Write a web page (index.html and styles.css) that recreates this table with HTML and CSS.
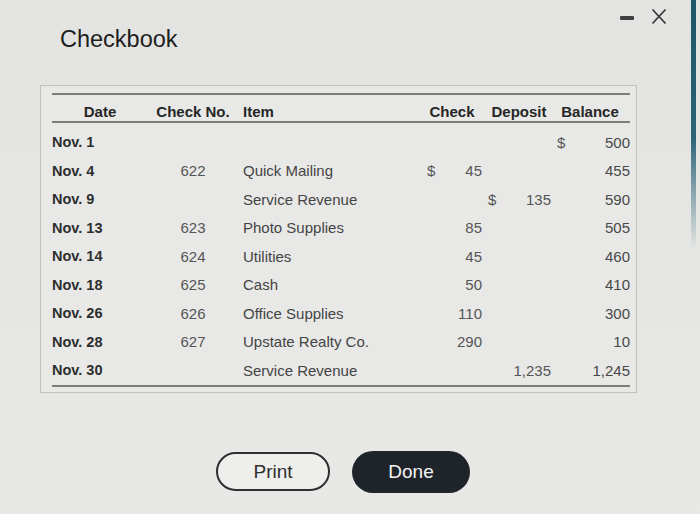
FILE: index.html
```html
<!DOCTYPE html>
<html>
<head>
<meta charset="utf-8">
<link rel="stylesheet" href="styles.css">
</head>
<body>
<div class="window">
  <div class="header">
    <h1 class="title">Checkbook</h1>
    <div class="controls">
      <span class="minimize"></span>
      <svg class="close" width="16" height="17" viewBox="0 0 16 17"><path d="M1.5 1.5 L14.5 15.5 M14.5 1.5 L1.5 15.5" stroke="#3a3a3a" stroke-width="1.8" fill="none"/></svg>
    </div>
  </div>

  <div class="sheet">
    <div class="rule-top"></div>
    <div class="grid head">
      <div class="h-date">Date</div>
      <div class="h-no">Check No.</div>
      <div class="h-item">Item</div>
      <div class="h-amt">Check</div>
      <div class="h-amt">Deposit</div>
      <div class="h-amt">Balance</div>
    </div>
    <div class="rows">
      <div class="grid row">
        <div class="c-date">Nov. 1</div><div class="c-no"></div><div class="c-item"></div>
        <div class="c-amt"></div><div class="c-amt"></div>
        <div class="c-amt bal"><span class="dol">$</span><span>500</span></div>
      </div>
      <div class="grid row">
        <div class="c-date">Nov. 4</div><div class="c-no">622</div><div class="c-item">Quick Mailing</div>
        <div class="c-amt chk"><span class="dol">$</span><span>45</span></div><div class="c-amt"></div>
        <div class="c-amt bal"><span></span><span>455</span></div>
      </div>
      <div class="grid row">
        <div class="c-date">Nov. 9</div><div class="c-no"></div><div class="c-item">Service Revenue</div>
        <div class="c-amt"></div><div class="c-amt dep"><span class="dol">$</span><span>135</span></div>
        <div class="c-amt bal"><span></span><span>590</span></div>
      </div>
      <div class="grid row">
        <div class="c-date">Nov. 13</div><div class="c-no">623</div><div class="c-item">Photo Supplies</div>
        <div class="c-amt chk"><span></span><span>85</span></div><div class="c-amt"></div>
        <div class="c-amt bal"><span></span><span>505</span></div>
      </div>
      <div class="grid row">
        <div class="c-date">Nov. 14</div><div class="c-no">624</div><div class="c-item">Utilities</div>
        <div class="c-amt chk"><span></span><span>45</span></div><div class="c-amt"></div>
        <div class="c-amt bal"><span></span><span>460</span></div>
      </div>
      <div class="grid row">
        <div class="c-date">Nov. 18</div><div class="c-no">625</div><div class="c-item">Cash</div>
        <div class="c-amt chk"><span></span><span>50</span></div><div class="c-amt"></div>
        <div class="c-amt bal"><span></span><span>410</span></div>
      </div>
      <div class="grid row">
        <div class="c-date">Nov. 26</div><div class="c-no">626</div><div class="c-item">Office Supplies</div>
        <div class="c-amt chk"><span></span><span>110</span></div><div class="c-amt"></div>
        <div class="c-amt bal"><span></span><span>300</span></div>
      </div>
      <div class="grid row">
        <div class="c-date">Nov. 28</div><div class="c-no">627</div><div class="c-item">Upstate Realty Co.</div>
        <div class="c-amt chk"><span></span><span>290</span></div><div class="c-amt"></div>
        <div class="c-amt bal"><span></span><span>10</span></div>
      </div>
      <div class="grid row">
        <div class="c-date">Nov. 30</div><div class="c-no"></div><div class="c-item">Service Revenue</div>
        <div class="c-amt"></div><div class="c-amt dep"><span></span><span>1,235</span></div>
        <div class="c-amt bal"><span></span><span>1,245</span></div>
      </div>
    </div>
    <div class="rule-bottom"></div>
  </div>

  <div class="actions">
    <button class="btn btn-print">Print</button>
    <button class="btn btn-done">Done</button>
  </div>

  <div class="edge"></div>
</div>
</body>
</html>
```

FILE: styles.css
```css
* { box-sizing: border-box; }

html, body {
  margin: 0;
  padding: 0;
}

body {
  width: 700px;
  height: 514px;
  overflow: hidden;
  background: #e4e5e3;
  font-family: "Liberation Sans", Arial, sans-serif;
  color: #333;
}

.window {
  position: relative;
  width: 700px;
  height: 514px;
  background: linear-gradient(180deg, #e3e4e2 0%, #e6e7e5 60%, #e8e9e7 100%);
}

.header {
  display: flex;
  align-items: flex-start;
  height: 85px;
  padding-right: 33px;
}

.title {
  margin: 25px 0 0 60px;
  font-size: 23.5px;
  line-height: 28px;
  font-weight: normal;
  color: #1e1e1e;
}

.controls {
  margin-left: auto;
  margin-top: 8px;
  display: flex;
  align-items: center;
  gap: 17px;
}

.minimize {
  display: block;
  width: 14px;
  height: 4px;
  background: #3f3f3f;
  border-radius: 1px;
  margin-top: 2px;
}

.close { display: block; }

.sheet {
  margin-left: 40px;
  width: 597px;
  border: 1px solid #c0c1bf;
  background: #e8e9e7;
  padding: 7px 6px 5px 11px;
}

.rule-top {
  height: 2px;
  background: #7d7e7c;
}

.rule-bottom {
  height: 2px;
  background: #7d7e7c;
}

.grid {
  display: grid;
  grid-template-columns: 96px 90px 184px 66px 68px 74px;
  align-items: center;
}

.head {
  height: 28px;
  padding-top: 6px;
  border-bottom: 2px solid #7d7e7c;
  font-weight: bold;
  font-size: 15px;
  color: #262626;
}

.h-date { text-align: center; }
.h-no { text-align: center; }
.h-item { padding-left: 5px; }
.h-amt { text-align: center; padding-right: 6px; }

.rows {
  padding-top: 5px;
}

.row {
  height: 28.5px;
  font-size: 15px;
  color: #4a4a4a;
}

.row .c-date {
  font-weight: bold;
  font-size: 14.5px;
  color: #2e2e2e;
}

.row .c-no {
  text-align: center;
  color: #555;
}

.row .c-item {
  padding-left: 5px;
  color: #444;
}

.c-amt {
  display: flex;
  justify-content: space-between;
  color: #555;
}

.chk { padding: 0 6px 0 5px; }
.dep { padding: 0 5px 0 0; }
.bal { padding: 0 0 0 1px; color: #484848; }

.dol { color: #555; }

.actions {
  display: flex;
  justify-content: center;
  align-items: center;
  gap: 22px;
  margin-top: 58px;
  padding-right: 14px;
}

.btn {
  font-family: "Liberation Sans", Arial, sans-serif;
  font-size: 19px;
  border-radius: 21px;
  cursor: pointer;
}

.btn-print {
  width: 114px;
  height: 39px;
  background: #eeeeec;
  border: 2px solid #2f2f2f;
  color: #2f2f2f;
}

.btn-done {
  width: 118px;
  height: 42px;
  background: #1f232a;
  border: none;
  color: #f4f4f4;
}

.edge {
  position: absolute;
  left: 691px;
  top: 0;
  width: 5px;
  height: 250px;
  background: linear-gradient(180deg, #1e5566 0%, #2a6478 55%, rgba(60, 110, 125, 0.35) 85%, rgba(200, 210, 212, 0) 100%);
}
```
